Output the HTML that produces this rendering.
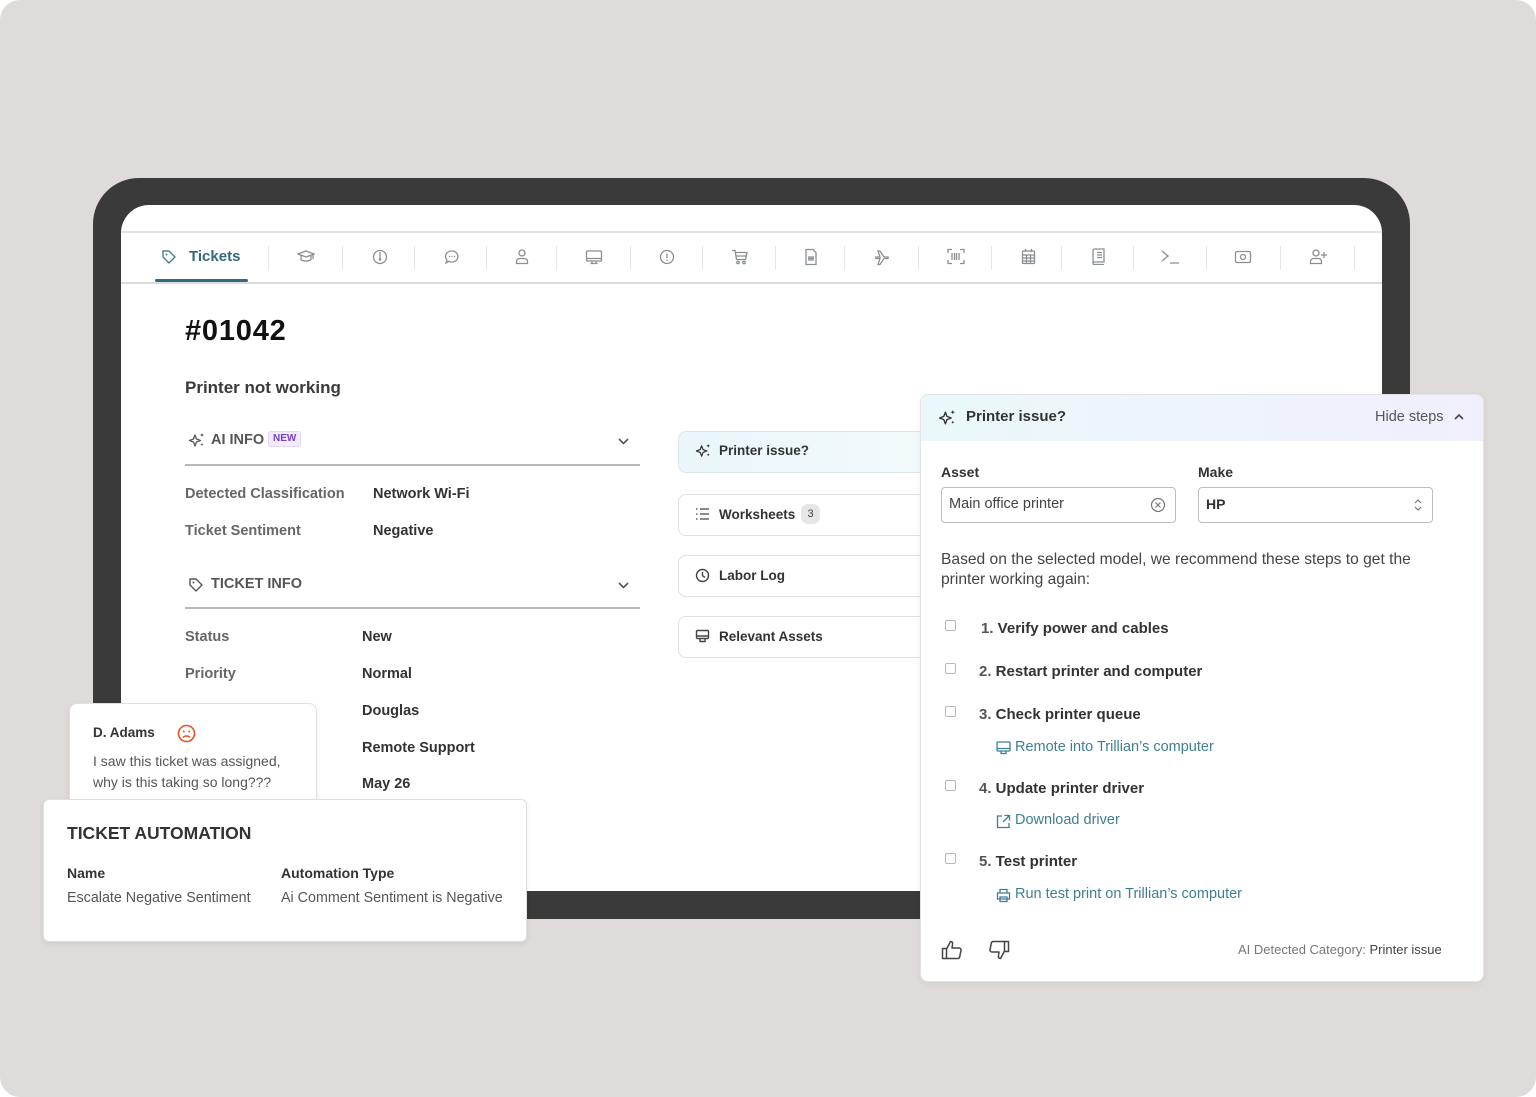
<!DOCTYPE html>
<html><head><meta charset="utf-8"><style>
*{margin:0;padding:0;box-sizing:border-box}
html,body{width:1536px;height:1097px;background:#fff;overflow:hidden}
body{font-family:"Liberation Sans",sans-serif;position:relative}
.bg{position:absolute;left:0;top:0;width:1536px;height:1097px;background:#dfdbda;border-radius:20px}
.frame{position:absolute;left:93px;top:178px;width:1317px;height:741px;background:#3a3a3a;border-radius:46px}
.screen{position:absolute;left:121px;top:205px;width:1261px;height:686px;background:#fff;border-radius:28px 28px 0 0;overflow:hidden}
.t{position:absolute;white-space:nowrap;line-height:1}
.b{font-weight:bold}
svg{position:absolute}
.card{position:absolute;background:#fff;border:1px solid #e2e2e2;border-radius:8px}
.sep{position:absolute;top:246px;width:1px;height:24px;background:#e6e6e6}
.cb{position:absolute;width:11px;height:11px;border:1px solid #b8b8b8;border-radius:2px;background:#fff}
.lnk{color:#3f7f92;font-size:14.5px}
.ic{stroke:#8a8f93;fill:none;stroke-width:1.3}
</style></head><body>
<div class="bg"></div>
<div class="frame"></div>
<div class="screen"></div>

<div style="position:absolute;left:121px;top:231px;width:1261px;height:2px;background:#e3e3e3"></div>
<div style="position:absolute;left:121px;top:282px;width:1261px;height:2px;background:#dcdcdc"></div>
<div style="position:absolute;left:155px;top:279px;width:93px;height:3px;background:#33697a;border-radius:2px"></div>
<svg style="left:161px;top:249px" width="16" height="16" viewBox="0 0 16 16"><path d="M2 2h6l6 6-6 6-6-6z" fill="none" stroke="#4a7f90" stroke-width="1.4" stroke-linejoin="round"/><circle cx="5.5" cy="5.5" r="1" fill="#4a7f90"/></svg>
<div class="t b" style="left:189px;top:249px;font-size:15px;color:#33697a">Tickets</div>
<div class="sep" style="left:268px"></div>
<div class="sep" style="left:342px"></div>
<div class="sep" style="left:414px"></div>
<div class="sep" style="left:486px"></div>
<div class="sep" style="left:556px"></div>
<div class="sep" style="left:630px"></div>
<div class="sep" style="left:702px"></div>
<div class="sep" style="left:775px"></div>
<div class="sep" style="left:844px"></div>
<div class="sep" style="left:918px"></div>
<div class="sep" style="left:991px"></div>
<div class="sep" style="left:1061px"></div>
<div class="sep" style="left:1133px"></div>
<div class="sep" style="left:1206px"></div>
<div class="sep" style="left:1280px"></div>
<div class="sep" style="left:1354px"></div>
<svg style="left:297px;top:249px" width="18" height="16" viewBox="0 0 18 16"><path class="ic" d="M1 5l8-3 8 3-8 3z M4 6.5v4c2 2 8 2 10 0v-4 M16 5v5"/></svg>
<svg style="left:372px;top:249px" width="16" height="16" viewBox="0 0 16 16"><circle class="ic" cx="8" cy="8" r="6.5"/><path class="ic" d="M8 3v7"/><circle cx="8" cy="10.5" r="1.3" fill="#8a8f93"/></svg>
<svg style="left:444px;top:249px" width="16" height="16" viewBox="0 0 16 16"><path class="ic" d="M8 2a6 5.5 0 1 1-3 10.3L2 14l1-3A6 5.5 0 0 1 8 2z"/><circle cx="5.5" cy="7.5" r=".7" fill="#8a8f93"/><circle cx="8" cy="7.5" r=".7" fill="#8a8f93"/><circle cx="10.5" cy="7.5" r=".7" fill="#8a8f93"/></svg>
<svg style="left:514px;top:248px" width="16" height="17" viewBox="0 0 16 17"><circle class="ic" cx="8" cy="5" r="3"/><path class="ic" d="M2.5 15.5v-2a3 3 0 0 1 3-3h5a3 3 0 0 1 3 3v2z"/></svg>
<svg style="left:585px;top:249px" width="18" height="16" viewBox="0 0 18 16"><rect class="ic" x="1.5" y="2" width="15" height="10" rx="1"/><path class="ic" d="M1.5 9.5h15 M7 12v2.5h4V12 M5.5 14.5h7"/></svg>
<svg style="left:659px;top:249px" width="16" height="16" viewBox="0 0 16 16"><circle class="ic" cx="8" cy="8" r="6.5"/><path class="ic" d="M8 4.5v4.5"/><circle cx="8" cy="11.3" r=".8" fill="#8a8f93"/></svg>
<svg style="left:731px;top:249px" width="18" height="16" viewBox="0 0 18 16"><path class="ic" d="M1 1.5h3l1.5 9h9l1.5-7H5 M5 7h11"/><circle class="ic" cx="7" cy="13.5" r="1.2"/><circle class="ic" cx="13" cy="13.5" r="1.2"/></svg>
<svg style="left:804px;top:248px" width="14" height="18" viewBox="0 0 14 18"><path class="ic" d="M2 1.5h7l3 3v12H2z M4 9h6 M4 12h6 M4 10.5h6"/></svg>
<svg style="left:873px;top:248px" width="18" height="18" viewBox="0 0 18 18"><path class="ic" d="M2 9h5l-2-6h2l4 6h4a1.5 1.5 0 0 1 0 1.5h-4l-4 6H5l2-6H2"/></svg>
<svg style="left:947px;top:248px" width="18" height="17" viewBox="0 0 18 17"><path class="ic" d="M1 5V1.5h4 M13 1.5h4V5 M17 12v3.5h-4 M5 15.5H1V12 M5 5v7 M7.5 5v7 M9.5 5v7 M12 5v7"/></svg>
<svg style="left:1021px;top:248px" width="15" height="17" viewBox="0 0 15 17"><rect class="ic" x="1.5" y="3" width="12" height="12.5" rx="1"/><path class="ic" d="M4.5 1v3 M10.5 1v3 M1.5 7h12 M1.5 10h12 M1.5 13h12 M5.5 7v8.5 M9.5 7v8.5"/></svg>
<svg style="left:1091px;top:248px" width="15" height="17" viewBox="0 0 15 17"><path class="ic" d="M2 2.5a1.5 1.5 0 0 1 1.5-1.5h9.5v13H3.5A1.5 1.5 0 0 0 2 15.5zM2 15.5a1 1 0 0 0 1 1h10 M6 4.5h5 M6 7h5 M6 9.5h5"/></svg>
<svg style="left:1160px;top:249px" width="20" height="16" viewBox="0 0 20 16"><path class="ic" d="M2 2l6 5-6 5 M10 14h9"/></svg>
<svg style="left:1234px;top:249px" width="18" height="16" viewBox="0 0 18 16"><rect class="ic" x="1.5" y="2.5" width="15" height="11" rx="1.5"/><circle class="ic" cx="9" cy="8" r="2.5"/></svg>
<svg style="left:1309px;top:248px" width="20" height="17" viewBox="0 0 20 17"><circle class="ic" cx="7" cy="5" r="3"/><path class="ic" d="M1.5 15.5v-2a3 3 0 0 1 3-3h5a3 3 0 0 1 3 3v2z M15 4v6 M12 7h6"/></svg>

<div class="t b" style="left:185px;top:317px;font-size:29px;letter-spacing:0.8px;color:#111">#01042</div>
<div class="t b" style="left:185px;top:379px;font-size:17px;color:#3a3a3a">Printer not working</div>

<svg style="left:188px;top:432px" width="18" height="17" viewBox="0 0 18 17"><path d="M7 3l1.5 4 4 1.5-4 1.5L7 14l-1.5-4-4-1.5 4-1.5z" fill="none" stroke="#555" stroke-width="1.3" stroke-linejoin="round"/><path d="M14 1l.6 1.4L16 3l-1.4.6L14 5l-.6-1.4L12 3l1.4-.6z M14 11l.5 1 1 .5-1 .5-.5 1-.5-1-1-.5 1-.5z" fill="#555"/></svg>
<div class="t b" style="left:211px;top:433px;font-size:14.5px;color:#555">AI INFO</div>
<div class="t b" style="left:268px;top:431px;font-size:10px;color:#7b3fd0;background:#f1ebfb;border:1px solid #e3d8f7;border-radius:3px;padding:2px 4px">NEW</div>
<svg style="left:617px;top:437px" width="13" height="9" viewBox="0 0 13 9"><path d="M2 2l4.5 4.5L11 2" fill="none" stroke="#555" stroke-width="1.6"/></svg>
<div style="position:absolute;left:185px;top:464px;width:455px;height:1.5px;background:#b8b8b8"></div>
<div class="t b" style="left:185px;top:487px;font-size:14.5px;color:#666">Detected Classification</div>
<div class="t b" style="left:373px;top:487px;font-size:14.5px;color:#333">Network Wi-Fi</div>
<div class="t b" style="left:185px;top:524px;font-size:14.5px;color:#666">Ticket Sentiment</div>
<div class="t b" style="left:373px;top:524px;font-size:14.5px;color:#333">Negative</div>

<svg style="left:188px;top:577px" width="16" height="16" viewBox="0 0 16 16"><path d="M2 2h6l6 6-6 6-6-6z" fill="none" stroke="#555" stroke-width="1.4" stroke-linejoin="round"/><circle cx="5.5" cy="5.5" r="1" fill="#555"/></svg>
<div class="t b" style="left:211px;top:577px;font-size:14.5px;color:#555">TICKET INFO</div>
<svg style="left:617px;top:581px" width="13" height="9" viewBox="0 0 13 9"><path d="M2 2l4.5 4.5L11 2" fill="none" stroke="#555" stroke-width="1.6"/></svg>
<div style="position:absolute;left:185px;top:607px;width:455px;height:1.5px;background:#b8b8b8"></div>
<div class="t b" style="left:185px;top:630px;font-size:14.5px;color:#666">Status</div>
<div class="t b" style="left:362px;top:630px;font-size:14.5px;color:#333">New</div>
<div class="t b" style="left:185px;top:667px;font-size:14.5px;color:#666">Priority</div>
<div class="t b" style="left:362px;top:667px;font-size:14.5px;color:#333">Normal</div>
<div class="t b" style="left:362px;top:704px;font-size:14.5px;color:#333">Douglas</div>
<div class="t b" style="left:362px;top:741px;font-size:14.5px;color:#333">Remote Support</div>
<div class="t b" style="left:362px;top:777px;font-size:14.5px;color:#333">May 26</div>

<div class="card" style="left:678px;top:431px;width:260px;height:42px;background:linear-gradient(90deg,#e9f6fa,#f3fbfd);border-color:#dbe6ea"></div>
<svg style="left:695px;top:443px" width="17" height="16" viewBox="0 0 18 17"><path d="M7 3l1.5 4 4 1.5-4 1.5L7 14l-1.5-4-4-1.5 4-1.5z" fill="none" stroke="#333" stroke-width="1.3" stroke-linejoin="round"/><path d="M14 1l.6 1.4L16 3l-1.4.6L14 5l-.6-1.4L12 3l1.4-.6z M14 11l.5 1 1 .5-1 .5-.5 1-.5-1-1-.5 1-.5z" fill="#333"/></svg>
<div class="t b" style="left:719px;top:444px;font-size:13.5px;color:#333">Printer issue?</div>
<div class="card" style="left:678px;top:494px;width:260px;height:42px"></div>
<svg style="left:695px;top:507px" width="15" height="14" viewBox="0 0 15 14"><path d="M1 2h1.5M1 7h1.5M1 12h1.5M5 2h9M5 7h9M5 12h9" stroke="#444" stroke-width="1.3"/></svg>
<div class="t b" style="left:719px;top:508px;font-size:13.5px;color:#333">Worksheets</div>
<div class="t" style="left:801px;top:504px;width:19px;height:20px;border-radius:7px;background:#e6e6e6;font-size:11px;color:#444;text-align:center;line-height:20px">3</div>
<div class="card" style="left:678px;top:555px;width:260px;height:42px"></div>
<svg style="left:695px;top:568px" width="15" height="15" viewBox="0 0 15 15"><circle cx="7.5" cy="7.5" r="6" fill="none" stroke="#444" stroke-width="1.4"/><path d="M7.5 4v3.8l2.5 1.6" fill="none" stroke="#444" stroke-width="1.4"/></svg>
<div class="t b" style="left:719px;top:569px;font-size:13.5px;color:#333">Labor Log</div>
<div class="card" style="left:678px;top:616px;width:260px;height:42px"></div>
<svg style="left:695px;top:629px" width="15" height="14" viewBox="0 0 15 14"><rect x="1.5" y="1.5" width="12" height="8" rx="1" fill="none" stroke="#444" stroke-width="1.4"/><path d="M1.5 7h12 M5 10v2.5h5V10" fill="none" stroke="#444" stroke-width="1.4"/></svg>
<div class="t b" style="left:719px;top:630px;font-size:13.5px;color:#333">Relevant Assets</div>

<div style="position:absolute;left:920px;top:394px;width:564px;height:588px;background:#fff;border:1px solid #e4e4e4;border-radius:8px;box-shadow:0 2px 8px rgba(0,0,0,.06);overflow:hidden">
 <div style="position:absolute;left:0;top:0;width:564px;height:46px;background:linear-gradient(90deg,#eaf8fb,#f1effc)"></div>
</div>
<svg style="left:938px;top:409px" width="19" height="18" viewBox="0 0 18 17"><path d="M7 3l1.5 4 4 1.5-4 1.5L7 14l-1.5-4-4-1.5 4-1.5z" fill="none" stroke="#333" stroke-width="1.3" stroke-linejoin="round"/><path d="M14 1l.6 1.4L16 3l-1.4.6L14 5l-.6-1.4L12 3l1.4-.6z M14 11l.5 1 1 .5-1 .5-.5 1-.5-1-1-.5 1-.5z" fill="#333"/></svg>
<div class="t b" style="left:966px;top:409px;font-size:15px;color:#333">Printer issue?</div>
<div class="t" style="left:1375px;top:410px;font-size:14.5px;color:#555">Hide steps</div>
<svg style="left:1453px;top:412px" width="12" height="9" viewBox="0 0 12 9"><path d="M2 7l4-4 4 4" fill="none" stroke="#444" stroke-width="1.6"/></svg>

<div class="t b" style="left:941px;top:465px;font-size:14px;color:#333">Asset</div>
<div class="t b" style="left:1198px;top:465px;font-size:14px;color:#333">Make</div>
<div class="card" style="left:941px;top:487px;width:235px;height:36px;border-color:#bdbdbd;border-radius:4px"></div>
<div class="t" style="left:949px;top:497px;font-size:14.5px;color:#444">Main office printer</div>
<svg style="left:1150px;top:497px" width="16" height="16" viewBox="0 0 16 16"><circle cx="8" cy="8" r="6.5" fill="none" stroke="#777" stroke-width="1.2"/><path d="M5.5 5.5l5 5M10.5 5.5l-5 5" stroke="#777" stroke-width="1.2"/></svg>
<div class="card" style="left:1198px;top:487px;width:235px;height:36px;border-color:#bdbdbd;border-radius:4px"></div>
<div class="t b" style="left:1206px;top:497px;font-size:14px;color:#333">HP</div>
<svg style="left:1412px;top:497px" width="12" height="16" viewBox="0 0 12 16"><path d="M3 6l3-3 3 3M3 10l3 3 3-3" fill="none" stroke="#777" stroke-width="1.2"/></svg>

<div class="t" style="left:941px;top:550px;font-size:15.6px;color:#444;line-height:20px">Based on the selected model, we recommend these steps to get the<br>printer working again:</div>

<div class="cb" style="left:945px;top:620px"></div>
<div class="t b" style="left:981px;top:621px;font-size:15px;color:#333"><span style="color:#555">1.</span> Verify power and cables</div>
<div class="cb" style="left:945px;top:663px"></div>
<div class="t b" style="left:979px;top:664px;font-size:15px;color:#333"><span style="color:#555">2.</span> Restart printer and computer</div>
<div class="cb" style="left:945px;top:706px"></div>
<div class="t b" style="left:979px;top:707px;font-size:15px;color:#333"><span style="color:#555">3.</span> Check printer queue</div>
<svg style="left:996px;top:741px" width="15" height="14" viewBox="0 0 15 14"><rect x="1" y="1" width="13" height="9" rx="1" fill="none" stroke="#3f7f92" stroke-width="1.3"/><path d="M1 7.5h13 M5 10v2.5h5V10" fill="none" stroke="#3f7f92" stroke-width="1.3"/></svg>
<div class="t lnk" style="left:1015px;top:740px">Remote into Trillian’s computer</div>
<div class="cb" style="left:945px;top:780px"></div>
<div class="t b" style="left:979px;top:781px;font-size:15px;color:#333"><span style="color:#555">4.</span> Update printer driver</div>
<svg style="left:996px;top:814px" width="15" height="15" viewBox="0 0 15 15"><path d="M6 2H1.5v11.5H13V9 M8.5 1.5h5v5 M13.5 1.5L7 8" fill="none" stroke="#3f7f92" stroke-width="1.3"/></svg>
<div class="t lnk" style="left:1015px;top:813px">Download driver</div>
<div class="cb" style="left:945px;top:853px"></div>
<div class="t b" style="left:979px;top:854px;font-size:15px;color:#333"><span style="color:#555">5.</span> Test printer</div>
<svg style="left:996px;top:888px" width="15" height="15" viewBox="0 0 15 15"><path d="M4 5V1.5h7V5 M1.5 5h12v6h-12z M4 9h7v4.5H4z" fill="none" stroke="#3f7f92" stroke-width="1.3"/></svg>
<div class="t lnk" style="left:1015px;top:887px">Run test print on Trillian’s computer</div>

<svg style="left:941px;top:940px" width="22" height="20" viewBox="0 0 22 20"><path d="M1.5 8.5h4v10h-4z M5.5 9l4-7.5c1.5 0 2.5 1 2 3L11 8h7a2 2 0 0 1 2 2.3l-1.3 6.5a2 2 0 0 1-2 1.7H5.5" fill="none" stroke="#444" stroke-width="1.5" stroke-linejoin="round"/></svg>
<svg style="left:988px;top:940px" width="22" height="20" viewBox="0 0 22 20"><g transform="rotate(180 11 10)"><path d="M1.5 8.5h4v10h-4z M5.5 9l4-7.5c1.5 0 2.5 1 2 3L11 8h7a2 2 0 0 1 2 2.3l-1.3 6.5a2 2 0 0 1-2 1.7H5.5" fill="none" stroke="#444" stroke-width="1.5" stroke-linejoin="round"/></g></svg>
<div class="t" style="left:1238px;top:943px;font-size:13px;color:#777">AI Detected Category: <span style="color:#444">Printer issue</span></div>

<div style="position:absolute;left:69px;top:703px;width:248px;height:107px;background:#fff;border:1px solid #e0e0e0;border-radius:8px;box-shadow:0 2px 6px rgba(0,0,0,.08)"></div>
<div class="t b" style="left:93px;top:726px;font-size:13.5px;color:#333">D. Adams</div>
<svg style="left:177px;top:724px" width="19" height="19" viewBox="0 0 19 19"><circle cx="9.5" cy="9.5" r="8" fill="none" stroke="#e8531f" stroke-width="1.6"/><circle cx="6.8" cy="7.5" r="1" fill="#e8531f"/><circle cx="12.2" cy="7.5" r="1" fill="#e8531f"/><path d="M6 13.5a4.5 4 0 0 1 7 0" fill="none" stroke="#e8531f" stroke-width="1.5"/></svg>
<div class="t" style="left:93px;top:751px;font-size:14px;color:#555;line-height:21px">I saw this ticket was assigned,<br>why is this taking so long???</div>

<div style="position:absolute;left:43px;top:799px;width:484px;height:143px;background:#fff;border:1px solid #e0e0e0;border-radius:6px;box-shadow:0 2px 6px rgba(0,0,0,.08)"></div>
<div class="t b" style="left:67px;top:825px;font-size:17.5px;color:#333">TICKET AUTOMATION</div>
<div class="t b" style="left:67px;top:866px;font-size:14px;color:#333">Name</div>
<div class="t b" style="left:281px;top:866px;font-size:14px;color:#333">Automation Type</div>
<div class="t" style="left:67px;top:891px;font-size:14.3px;color:#555">Escalate Negative Sentiment</div>
<div class="t" style="left:281px;top:891px;font-size:14.3px;color:#555">Ai Comment Sentiment is Negative</div>
</body></html>
